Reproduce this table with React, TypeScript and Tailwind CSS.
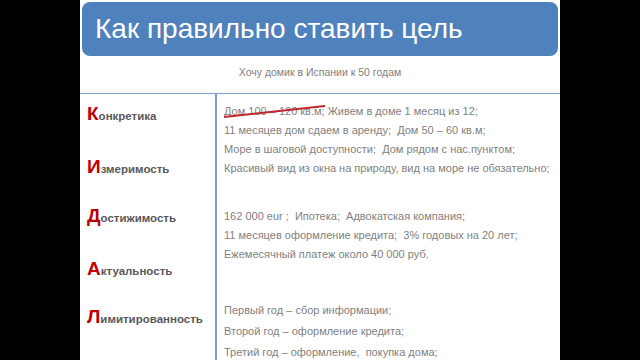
const labels = [
	{ first: "К", rest: "онкретика", mt: "mt-0" },
	{ first: "И", rest: "змеримость", mt: "mt-[29px]" },
	{ first: "Д", rest: "остижимость", mt: "mt-[25px]" },
	{ first: "А", rest: "ктуальность", mt: "mt-[29px]" },
	{ first: "Л", rest: "имитированность", mt: "mt-[24px]" },
];

function Label({ first, rest, mt }: { first: string; rest: string; mt: string }) {
	return (
		<div className={`flex h-[24px] items-baseline ${mt}`}>
			<span className="text-[19px] font-bold leading-[24px] text-[#c00000]">{first}</span>
			<span className="text-[11.5px] font-bold leading-[24px] text-[#595959]">{rest}</span>
		</div>
	);
}

export default function App() {
	return (
		<div className="flex h-[360px] w-[640px] justify-center bg-black font-['Liberation_Sans',sans-serif]">
			<div className="flex h-full w-[480px] flex-col overflow-hidden bg-white">
				{/* Title */}
				<div className="mx-[2px] mt-[2px] flex h-[54px] shrink-0 items-center rounded-lg bg-[#4f81bd] pl-[13px]">
					<h1 className="text-[28px] leading-none text-white">Как правильно ставить цель</h1>
				</div>
				<div className="mt-[8px] h-[16px] shrink-0 text-center text-[10.5px] leading-[16px] text-[#7f7f7f]">
					Хочу домик в Испании к 50 годам
				</div>

				{/* Table */}
				<div className="mt-[13px] grid flex-1 grid-cols-[135px_1fr] border-t border-[#7f9fc8]">
					<div className="pl-[7px] pt-[8px]">
						{labels.map((l) => (
							<Label key={l.first} {...l} />
						))}
					</div>
					<div className="border-l-2 border-[#7f9fc8] pl-[7px] pt-[8px] text-[11px] text-[#7f7f7f]">
						<div className="leading-[19px]">
							<div className="relative">
								Дом 100 – 120 кв.м; Живем в доме 1 месяц из 12;
								<svg className="absolute left-0 top-[-6px]" width="110" height="26" viewBox="0 0 110 26">
									<path d="M0 21 L101 10" stroke="#c0262c" strokeWidth="2" fill="none" />
								</svg>
							</div>
							<div>11 месяцев дом сдаем в аренду;&nbsp; Дом 50 – 60 кв.м;</div>
							<div>Море в шаговой доступности;&nbsp; Дом рядом с нас.пунктом;</div>
							<div>Красивый вид из окна на природу, вид на море не обязательно;</div>
						</div>
						<div className="mt-[29px] leading-[19px]">
							<div>162 000 eur ;&nbsp; Ипотека;&nbsp; Адвокатская компания;</div>
							<div>11 месяцев оформление кредита;&nbsp; 3% годовых на 20 лет;</div>
							<div>Ежемесячный платеж около 40 000 руб.</div>
						</div>
						<div className="mt-[36px] leading-[21px]">
							<div>Первый год – сбор информации;</div>
							<div>Второй год – оформление кредита;</div>
							<div>Третий год – оформление,&nbsp; покупка дома;</div>
						</div>
					</div>
				</div>
			</div>
		</div>
	);
}
